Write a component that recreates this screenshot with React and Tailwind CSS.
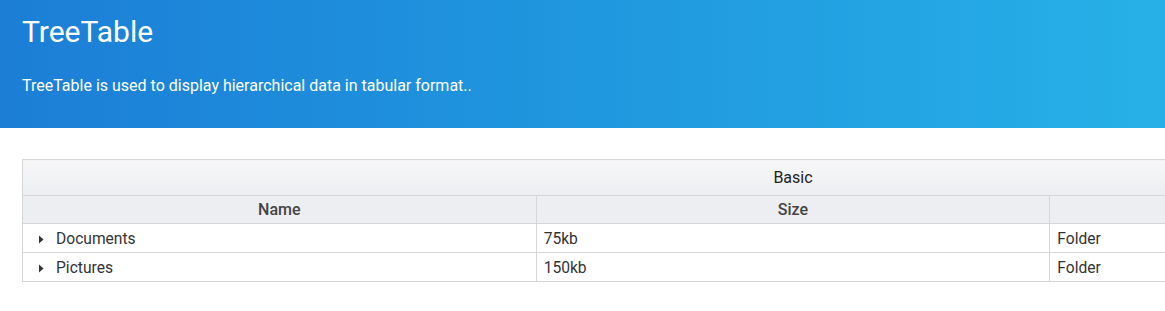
import React from "react";

const rows = [
  { name: "Documents", size: "75kb", type: "Folder" },
  { name: "Pictures", size: "150kb", type: "Folder" },
];

const Caret = () => (
  <svg width="6" height="9" viewBox="0 0 6 9" className="mr-[12px] shrink-0">
    <path d="M1 0.5 L5.5 4.5 L1 8.5 Z" fill="#333" />
  </svg>
);

export default function App() {
  return (
    <div className="w-[1165px] h-[311px] overflow-hidden bg-white font-['Roboto',sans-serif]">
      <div className="h-[128px] bg-gradient-to-r from-[#1c7ed6] to-[#27b0e7] px-[22px] pt-[14px] text-white">
        <h1 className="text-[30px] leading-[36px] font-normal">TreeTable</h1>
        <p className="mt-[26px] text-[16px] leading-[20px]">
          TreeTable is used to display hierarchical data in tabular format..
        </p>
      </div>

      <div className="pt-[31px] pl-[22px]">
        <table className="w-[1542px] border-collapse text-[15.6px] text-[#333] table-fixed">
          <thead>
            <tr>
              <th
                colSpan={3}
                className="h-[36px] border border-[#d6d6d6] bg-gradient-to-b from-[#f7f7f8] to-[#eceef1] text-[16px] font-normal text-[#222] text-center"
              >
                Basic
              </th>
            </tr>
            <tr>
              <th className="w-[514px] h-[28px] border border-[#d6d6d6] bg-[#eceef1] text-[16px] font-medium text-[#444] text-center">
                Name
              </th>
              <th className="w-[514px] h-[28px] border border-[#d6d6d6] bg-[#eceef1] text-[16px] font-medium text-[#444] text-center">
                Size
              </th>
              <th className="w-[514px] h-[28px] border border-[#d6d6d6] bg-[#eceef1] text-[16px] font-medium text-[#444] text-center">
                Type
              </th>
            </tr>
          </thead>
          <tbody>
            {rows.map((r) => (
              <tr key={r.name}>
                <td className="h-[29px] border border-[#d6d6d6] px-[15px] pt-[3px]">
                  <div className="flex items-center">
                    <Caret />
                    {r.name}
                  </div>
                </td>
                <td className="h-[29px] border border-[#d6d6d6] px-[7px] pt-[3px]">{r.size}</td>
                <td className="h-[29px] border border-[#d6d6d6] px-[7px] pt-[3px]">{r.type}</td>
              </tr>
            ))}
          </tbody>
        </table>
      </div>
    </div>
  );
}
